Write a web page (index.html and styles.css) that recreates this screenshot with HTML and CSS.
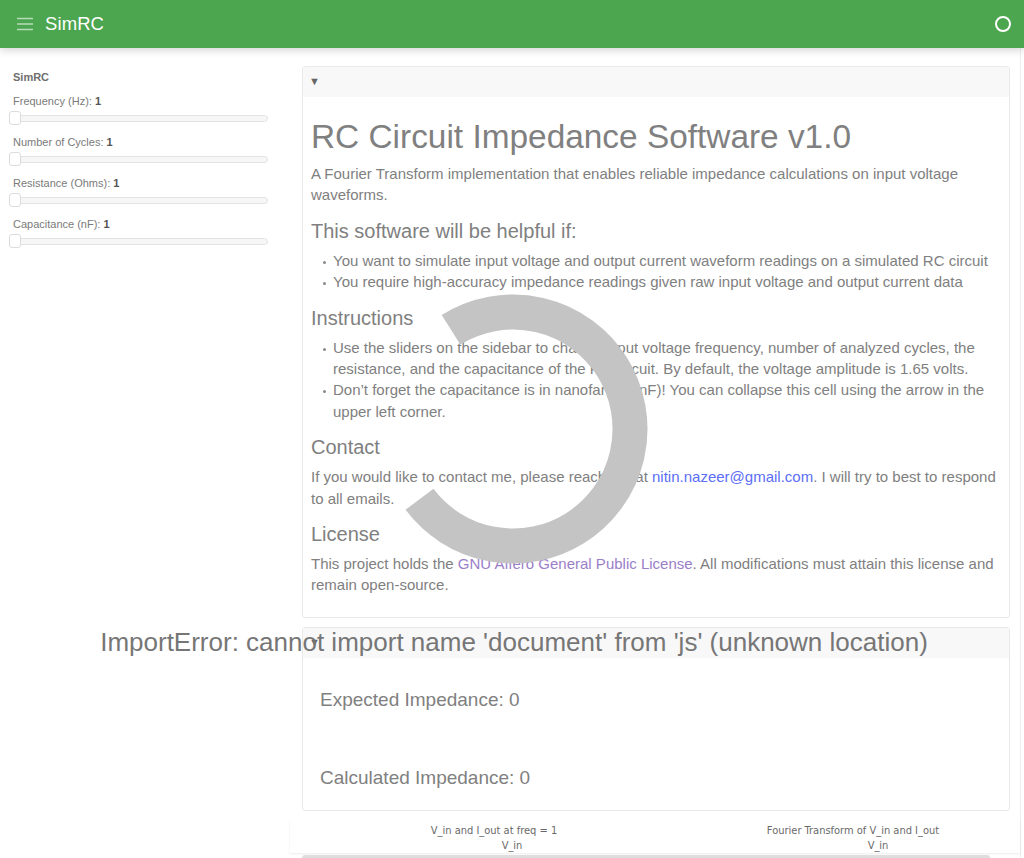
FILE: index.html
```html
<!DOCTYPE html>
<html>
<head>
<meta charset="utf-8">
<title>SimRC</title>
<link rel="stylesheet" href="styles.css">
</head>
<body>
<header class="topbar">
  <svg class="hamburger" width="18" height="14" viewBox="0 0 18 14"><path d="M1 1.5h16M1 7h16M1 12.5h16" stroke="rgba(255,255,255,0.6)" stroke-width="1.4" fill="none"/></svg>
  <span class="brand">SimRC</span>
  <span class="spacer"></span>
  <svg class="status" width="18" height="18" viewBox="0 0 18 18"><circle cx="9" cy="9" r="7" stroke="#fff" stroke-width="2" fill="none"/></svg>
</header>
<div class="layout">
  <aside class="sidebar">
    <div class="side-title">SimRC</div>
    <div class="control"><div class="label">Frequency (Hz): <b>1</b></div><div class="slider"><span class="thumb"></span></div></div>
    <div class="control"><div class="label">Number of Cycles: <b>1</b></div><div class="slider"><span class="thumb"></span></div></div>
    <div class="control"><div class="label">Resistance (Ohms): <b>1</b></div><div class="slider"><span class="thumb"></span></div></div>
    <div class="control"><div class="label">Capacitance (nF): <b>1</b></div><div class="slider"><span class="thumb"></span></div></div>
  </aside>
  <main class="content">
    <section class="card">
      <div class="card-head">&#9660;</div>
      <div class="card-body">
        <h1>RC Circuit Impedance Software v1.0</h1>
        <p>A Fourier Transform implementation that enables reliable impedance calculations on input voltage waveforms.</p>
        <h2>This software will be helpful if:</h2>
        <ul>
          <li>You want to simulate input voltage and output current waveform readings on a simulated RC circuit</li>
          <li>You require high-accuracy impedance readings given raw input voltage and output current data</li>
        </ul>
        <h2>Instructions</h2>
        <ul>
          <li>Use the sliders on the sidebar to change input voltage frequency, number of analyzed cycles, the resistance, and the capacitance of the RC circuit. By default, the voltage amplitude is 1.65 volts.</li>
          <li>Don’t forget the capacitance is in nanofarads (nF)! You can collapse this cell using the arrow in the upper left corner.</li>
        </ul>
        <h2>Contact</h2>
        <p>If you would like to contact me, please reach out at <a class="mail" href="#">nitin.nazeer@gmail.com</a>. I will try to best to respond to all emails.</p>
        <h2>License</h2>
        <p>This project holds the <a class="visited" href="#">GNU Affero General Public License</a>. All modifications must attain this license and remain open-source.</p>
      </div>
    </section>
    <section class="card card-2">
      <div class="card-head">&#9660;</div>
      <div class="card-body imp">
        <div class="imp-line">Expected Impedance: 0</div>
        <div class="imp-line">Calculated Impedance: 0</div>
      </div>
    </section>
    <div class="charts">
      <div class="chart chart-a"><div class="chart-title">V_in and I_out at freq = 1</div><div class="legend">V_in</div></div>
      <div class="chart chart-b"><div class="chart-title">Fourier Transform of V_in and I_out</div><div class="legend">V_in</div></div>
    </div>
    <div class="hscroll"></div>
  </main>
</div>
<svg class="spinner" width="290" height="290" viewBox="0 0 290 290"><circle cx="145" cy="145" r="117" fill="none" stroke="#c4c4c4" stroke-width="35" stroke-dasharray="541 735" transform="rotate(-122 145 145)"/></svg>
<div class="error">ImportError: cannot import name 'document' from 'js' (unknown location)</div>
</body>
</html>
```
FILE: styles.css
```css
html, body {
  margin: 0;
  padding: 0;
  height: 858px;
  overflow: hidden;
  background: #fff;
  font-family: "Liberation Sans", Arial, sans-serif;
  color: #808080;
}

.topbar {
  height: 48px;
  background: #4ca64f;
  display: flex;
  align-items: center;
  padding: 0 12px 0 16px;
  box-shadow: 0 2px 8px rgba(0, 0, 0, 0.18);
  position: relative;
  z-index: 2;
}
.hamburger { margin-right: 11px; }
.brand {
  color: #fff;
  font-size: 18.5px;
  letter-spacing: 0.1px;
}
.spacer { flex: 1; }

.layout {
  display: flex;
  height: 810px;
}

.sidebar {
  width: 290px;
  flex: none;
  box-sizing: border-box;
  padding: 23px 22px 0 13px;
}
.side-title {
  font-size: 11px;
  font-weight: bold;
  color: #6f6f6f;
  margin-bottom: 12px;
}
.control { margin-bottom: 14px; }
.label {
  font-size: 11px;
  color: #7a7a7a;
  margin-bottom: 8px;
}
.label b { color: #555; }
.slider {
  position: relative;
  height: 5px;
  border: 1px solid #e3e3e3;
  border-radius: 4px;
  background: #f6f6f6;
}
.thumb {
  position: absolute;
  left: -5px;
  top: -5px;
  width: 10px;
  height: 12px;
  background: #fff;
  border: 1px solid #dcdcdc;
  border-radius: 3px;
}

.content {
  flex: 1;
  box-sizing: border-box;
  padding: 18px 10px 0 12px;
  border-right: 1px solid #eeeeee;
  margin-right: 3px;
  position: relative;
}

.card {
  border: 1px solid #e9e9e9;
  border-radius: 3px;
  margin-bottom: 9px;
  background: #fff;
}
.card-head {
  height: 30px;
  background: #f8f8f8;
  font-size: 11px;
  color: #666;
  padding: 8px 0 0 6px;
  box-sizing: border-box;
}
.card-body {
  padding: 20px 9px 21px 8px;
}
h1 {
  font-weight: normal;
  font-size: 33.4px;
  margin: 0 0 6px;
  line-height: 40px;
}
h2 {
  font-weight: normal;
  font-size: 20px;
  line-height: 24px;
  margin: 13px 0 7px;
}
p {
  font-size: 15px;
  line-height: 21.4px;
  margin: 0;
}
ul {
  list-style: none;
  margin: 0;
  padding: 0 0 0 12px;
}
li {
  font-size: 15px;
  line-height: 21.4px;
  position: relative;
  padding-left: 10px;
}
li::before {
  content: "";
  position: absolute;
  left: 0;
  top: 11px;
  width: 3px;
  height: 3px;
  border-radius: 50%;
  background: #8a8a8a;
}
a { text-decoration: none; }
.mail { color: #5b6ef5; }
.visited { color: #9a7ec8; }

.card-body.imp {
  padding: 30px 17px 20px 17px;
}
.imp-line {
  font-size: 19px;
  line-height: 24px;
}
.imp-line + .imp-line { margin-top: 54px; }

.charts {
  display: flex;
  font-family: "DejaVu Sans Condensed", "DejaVu Sans", sans-serif;
  font-size: 11px;
  color: #6a6a6a;
  line-height: 15px;
  padding-top: 3px;
  background: #fff;
  margin: 0 -10px 0 -12px;
  padding-left: 12px;
  box-shadow: 0 1px 2px rgba(0, 0, 0, 0.08);
}
.chart { text-align: center; }
.chart-a { width: 384px; }
.chart-b { width: 334px; }
.chart-a .legend { padding-left: 36px; }
.chart-b .legend { padding-left: 50px; }
.hscroll {
  height: 6px;
  margin: 2px 20px 0 0;
  background: #dedede;
  border-radius: 3px;
}

.spinner {
  position: absolute;
  left: 368px;
  top: 284px;
  z-index: 5;
}
.error {
  position: absolute;
  left: 0;
  width: 1028px;
  top: 626px;
  text-align: center;
  font-size: 26px;
  line-height: 32px;
  color: #767676;
  z-index: 6;
}
```
